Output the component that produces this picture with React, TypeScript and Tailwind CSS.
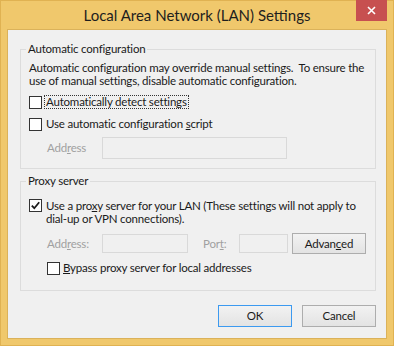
import React from 'react';

const FONT = { fontFamily: 'Lato, "Noto Sans", sans-serif' };

const Check: React.FC<{ checked?: boolean }> = ({ checked }) => (
  <span className="flex h-[13px] w-[13px] shrink-0 items-center justify-center border border-[#333333] bg-white">
    {checked && (
      <svg width="9" height="9" viewBox="0 0 9 9">
        <path d="M0.8 4.6 L3.3 7.2 L8.2 1.2" fill="none" stroke="#1a1a1a" strokeWidth="1.8" />
      </svg>
    )}
  </span>
);

const Field: React.FC<{ className: string }> = ({ className }) => (
  <span className={`block border border-[#d9d9d9] bg-[#f0f0f0] ${className}`} />
);

const Btn: React.FC<{ children: React.ReactNode; className?: string }> = ({ children, className = '' }) => (
  <span
    className={`flex items-center justify-center bg-gradient-to-b from-[#f2f2f2] to-[#e3e3e3] text-[#1a1a1a] ${className}`}
  >
    {children}
  </span>
);

export default function App() {
  return (
    <div
      className="flex h-[346px] w-[394px] flex-col border border-[#e0b252] bg-[#f0c86c] text-[11.5px] tracking-[-0.2px] text-[#1a1a1a]"
      style={FONT}
    >
      {/* title bar */}
      <div className="relative flex h-[28px] shrink-0 items-center justify-center">
        <span className="text-[15px] tracking-normal text-[#1e1e1e]">Local Area Network (LAN) Settings</span>
        <span className="absolute right-[6px] top-[-1px] flex h-[21px] w-[31px] items-center justify-center bg-[#c75050]">
          <svg width="9" height="9" viewBox="0 0 9 9">
            <path d="M1 1 L8 8 M8 1 L1 8" stroke="#ffffff" strokeWidth="1.6" />
          </svg>
        </span>
      </div>

      {/* client area */}
      <div className="mx-[6px] flex h-[310px] flex-col border border-[#dbb25a] bg-[#f0f0f0]">
        {/* automatic configuration */}
        <fieldset className="ml-[12px] mt-[11px] w-[356px] border border-[#dcdcdc] pb-[9px]">
          <legend className="ml-[5px] px-[2px] leading-[16px]">Automatic configuration</legend>
          <p className="mt-[4px] whitespace-nowrap pl-[8px] leading-[13px]">
            Automatic configuration may override manual settings.&nbsp; To ensure the
            <br />
            use of manual settings, disable automatic configuration.
          </p>
          <div className="mt-[7px] flex h-[16px] items-center pl-[8px]">
            <Check />
            <span className="ml-[2px] border border-dotted border-[#333333] px-[1px] leading-[12px]">
              Automatically detect settings
            </span>
          </div>
          <div className="mt-[6px] flex h-[16px] items-center pl-[8px]">
            <Check />
            <span className="ml-[4px]">
              Use automatic configuration <span className="underline">s</span>cript
            </span>
          </div>
          <div className="mt-[5px] flex h-[22px] items-center pl-[26px]">
            <span className="w-[55px] text-[#a0a0a0]">
              Add<span className="underline">r</span>ess
            </span>
            <Field className="h-[22px] w-[185px]" />
          </div>
        </fieldset>

        {/* proxy server */}
        <fieldset className="ml-[12px] mt-[4px] w-[356px] border border-[#dcdcdc] pb-[14px]">
          <legend className="ml-[5px] px-[2px] leading-[16px]">Proxy server</legend>
          <div className="mt-[10px] flex pl-[8px]">
            <Check checked />
            <span className="ml-[4px] whitespace-nowrap leading-[13px]">
              Use a pro<span className="underline">x</span>y server for your LAN (These settings will not apply to
              <br />
              dial-up or VPN connections).
            </span>
          </div>
          <div className="mt-[8px] flex h-[21px] items-center pl-[26px]">
            <span className="w-[55px] text-[#a0a0a0]">
              Add<span className="underline">r</span>ess:
            </span>
            <Field className="h-[19px] w-[86px]" />
            <span className="ml-[15px] w-[36px] text-[#a0a0a0]">
              Por<span className="underline">t</span>:
            </span>
            <Field className="h-[19px] w-[49px]" />
            <Btn className="ml-[4px] h-[21px] w-[74px] border border-[#adadad]">
              Advan<span className="underline">c</span>ed
            </Btn>
          </div>
          <div className="mt-[6px] flex h-[16px] items-center pl-[26px]">
            <Check />
            <span className="ml-[3px]">
              <span className="underline">B</span>ypass proxy server for local addresses
            </span>
          </div>
        </fieldset>

        {/* buttons */}
        <div className="ml-[210px] mt-[14px] flex gap-[10px]">
          <Btn className="h-[22px] w-[74px] border border-[#3c9af0]">OK</Btn>
          <Btn className="h-[22px] w-[74px] border border-[#adadad]">Cancel</Btn>
        </div>
      </div>
    </div>
  );
}
